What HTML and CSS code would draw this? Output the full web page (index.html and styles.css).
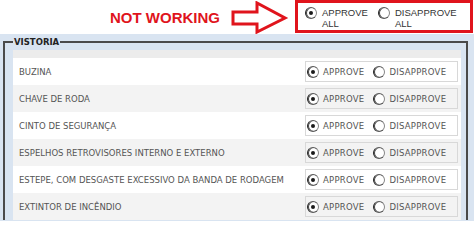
FILE: index.html
```html
<!DOCTYPE html>
<html>
<head>
<meta charset="utf-8">
<link rel="stylesheet" href="styles.css">
</head>
<body>
<div class="top">
  <span class="note">NOT WORKING</span>
  <svg class="arrow" width="58" height="33" viewBox="0 0 58 33">
    <polygon points="2,11 26,11 26,2 54,17 26,31 26,23 2,23" fill="#fff" stroke="#e0141c" stroke-width="3" stroke-linejoin="miter"/>
  </svg>
  <div class="allbox">
    <label class="allopt"><span class="radio big checked"></span><span class="alltxt">APPROVE<br>ALL</span></label>
    <label class="allopt second"><span class="radio big"></span><span class="alltxt">DISAPPROVE<br>ALL</span></label>
  </div>
</div>
<div class="panel">
  <fieldset class="vist">
    <legend>VISTORIA</legend>
    <div class="list">
      <div class="strip"></div>
      <div class="row"><span class="lbl">BUZINA</span><div class="opts"><span class="radio checked"></span><span class="otxt">APPROVE</span><span class="radio r2"></span><span class="otxt">DISAPPROVE</span></div></div>
      <div class="row alt"><span class="lbl">CHAVE DE RODA</span><div class="opts"><span class="radio checked"></span><span class="otxt">APPROVE</span><span class="radio r2"></span><span class="otxt">DISAPPROVE</span></div></div>
      <div class="row"><span class="lbl">CINTO DE SEGURANÇA</span><div class="opts"><span class="radio checked"></span><span class="otxt">APPROVE</span><span class="radio r2"></span><span class="otxt">DISAPPROVE</span></div></div>
      <div class="row alt"><span class="lbl">ESPELHOS RETROVISORES INTERNO E EXTERNO</span><div class="opts"><span class="radio checked"></span><span class="otxt">APPROVE</span><span class="radio r2"></span><span class="otxt">DISAPPROVE</span></div></div>
      <div class="row"><span class="lbl">ESTEPE, COM DESGASTE EXCESSIVO DA BANDA DE RODAGEM</span><div class="opts"><span class="radio checked"></span><span class="otxt">APPROVE</span><span class="radio r2"></span><span class="otxt">DISAPPROVE</span></div></div>
      <div class="row alt"><span class="lbl">EXTINTOR DE INCÊNDIO</span><div class="opts"><span class="radio checked"></span><span class="otxt">APPROVE</span><span class="radio r2"></span><span class="otxt">DISAPPROVE</span></div></div>
    </div>
  </fieldset>
</div>
</body>
</html>
```
FILE: styles.css
```css
html, body {
  margin: 0;
  padding: 0;
  background: #fff;
  overflow: hidden;
}
body {
  font-family: "DejaVu Sans", Verdana, sans-serif;
  width: 474px;
  height: 221px;
}
.top {
  height: 34px;
  display: flex;
  align-items: flex-start;
  padding-left: 110px;
  box-sizing: border-box;
}
.note {
  font-family: "Liberation Sans", Arial, sans-serif;
  font-weight: bold;
  font-size: 15px;
  color: #e0141c;
  line-height: 17px;
  margin-top: 9px;
  width: 121px;
}
.arrow {
  display: block;
  margin-top: 1px;
}
.allbox {
  margin-left: 6px;
  width: 178px;
  height: 33px;
  box-sizing: border-box;
  border: 3px solid #e0141c;
  display: flex;
  align-items: flex-start;
  padding: 4px 0 0 7px;
}
.allopt {
  display: flex;
  align-items: flex-start;
}
.allopt.second {
  margin-left: 10px;
}
.alltxt {
  font-family: "Liberation Sans", Arial, sans-serif;
  font-size: 9.5px;
  line-height: 11px;
  color: #333;
  margin-left: 5px;
}
.radio {
  display: inline-block;
  width: 12px;
  height: 12px;
  box-sizing: border-box;
  border-radius: 50%;
  border: 1px solid #888;
  border-left-color: #222;
  border-top-color: #555;
  border-bottom-color: #555;
  box-shadow: inset 1px 0 0 #444;
  background: #fff;
  position: relative;
  flex: none;
}
.radio.checked::after {
  content: "";
  position: absolute;
  left: 3px;
  top: 3px;
  width: 4px;
  height: 4px;
  border-radius: 50%;
  background: #1a1a1a;
}
.panel {
  background: #d9e4f1;
  padding: 3px 6px 0 3px;
  height: 187px;
  box-sizing: border-box;
}
.vist {
  margin: 0;
  border: 2px solid #4a4a4a;
  border-bottom: none;
  padding: 3px 5px 0 8px;
  min-width: 0;
}
.vist legend {
  font-weight: bold;
  font-size: 8.5px;
  line-height: 10px;
  color: #222;
  padding: 0 1px;
  margin-left: 0;
}
.list {
  background: #fff;
}
.strip {
  height: 8px;
  background: #ececec;
}
.row {
  height: 27px;
  display: flex;
  align-items: center;
  justify-content: space-between;
  padding: 0 3px 0 6px;
  background: #fff;
}
.row.alt {
  background: #f3f3f3;
}
.lbl {
  font-size: 8.5px;
  color: #555;
  white-space: nowrap;
}
.opts {
  width: 153px;
  height: 21px;
  box-sizing: border-box;
  border: 1px solid #d8d8d8;
  display: flex;
  align-items: center;
  padding-left: 1px;
}
.otxt {
  font-size: 8.5px;
  letter-spacing: 0.25px;
  color: #555;
  margin-left: 4px;
  white-space: nowrap;
}
.radio.r2 {
  margin-left: 9px;
}
```
